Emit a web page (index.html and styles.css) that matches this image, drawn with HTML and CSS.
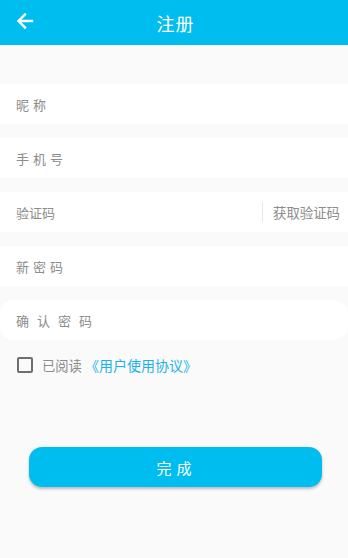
FILE: index.html
```html
<!DOCTYPE html>
<html lang="zh-CN">
<head>
<meta charset="utf-8">
<title>注册</title>
<link rel="stylesheet" href="styles.css">
</head>
<body>
<div class="page">
  <header class="topbar">
    <span class="back">
      <svg width="18" height="18" viewBox="0 0 18 18"><path d="M16 9H3M9 2.5L2.5 9L9 15.5" fill="none" stroke="#fff" stroke-width="2.4" stroke-linecap="square"/></svg>
    </span>
    <h1 class="title">注册</h1>
  </header>
  <main class="form">
    <div class="field"><span class="ph sp4">昵称</span></div>
    <div class="field"><span class="ph sp4">手机号</span></div>
    <div class="field code">
      <span class="ph">验证码</span>
      <span class="getcode">获取验证码</span>
    </div>
    <div class="field"><span class="ph sp4">新密码</span></div>
    <div class="field rounded"><span class="ph sp8">确认密码</span></div>
    <label class="agree">
      <span class="box"></span>
      <span class="read">已阅读</span>
      <span class="link">《用户使用协议》</span>
    </label>
    <button class="submit">完成</button>
  </main>
</div>
</body>
</html>
```
FILE: styles.css
```css
* { box-sizing: border-box; }
html, body { margin: 0; padding: 0; }
body {
  background: #fafafa;
  font-family: "Noto Sans CJK SC", "Noto Sans", sans-serif;
  width: 348px;
  height: 558px;
  overflow: hidden;
}
.topbar {
  height: 45px;
  background: #00bdef;
  display: flex;
  align-items: center;
  justify-content: center;
  position: relative;
}
.back {
  position: absolute;
  left: 16px;
  top: 12px;
  width: 18px;
  height: 18px;
  display: flex;
}
.title {
  margin: 0;
  color: #fff;
  font-size: 18px;
  font-weight: 400;
  letter-spacing: 1px;
  padding-left: 3px;
}
.form {
  padding-top: 39px;
  display: flex;
  flex-direction: column;
}
.field {
  height: 40px;
  background: #fff;
  display: flex;
  align-items: center;
  padding-left: 16px;
  margin-bottom: 14px;
}
.field.rounded { border-radius: 14px; }
.ph {
  color: #8c8c8c;
  font-size: 13px;
  line-height: 1;
}
.sp4 { letter-spacing: 4px; }
.sp8 { letter-spacing: 8px; }
.code { justify-content: space-between; padding-right: 8px; }
.getcode {
  color: #8c8c8c;
  font-size: 13.4px;
  border-left: 1px solid #e6e6e6;
  padding-left: 10px;
  height: 20px;
  display: flex;
  align-items: center;
}
.agree {
  display: flex;
  align-items: center;
  padding-left: 17px;
  margin-top: -1px;
  height: 24px;
}
.box {
  width: 16px;
  height: 16px;
  border: 2px solid #6e6e6e;
  border-radius: 2px;
  margin-right: 9px;
}
.read {
  color: #8c8c8c;
  font-size: 13.3px;
  margin-right: 9px;
}
.link {
  color: #1ab2e8;
  font-size: 14px;
  margin-left: -6px;
}
.submit {
  margin: 70px 26px 0 29px;
  height: 40px;
  border: none;
  border-radius: 13px;
  background: #00bdef;
  color: #fff;
  font-family: inherit;
  font-size: 15px;
  letter-spacing: 5px;
  padding-left: 8px;
  box-shadow: 0 2px 3px rgba(0,0,0,0.25);
}
```
